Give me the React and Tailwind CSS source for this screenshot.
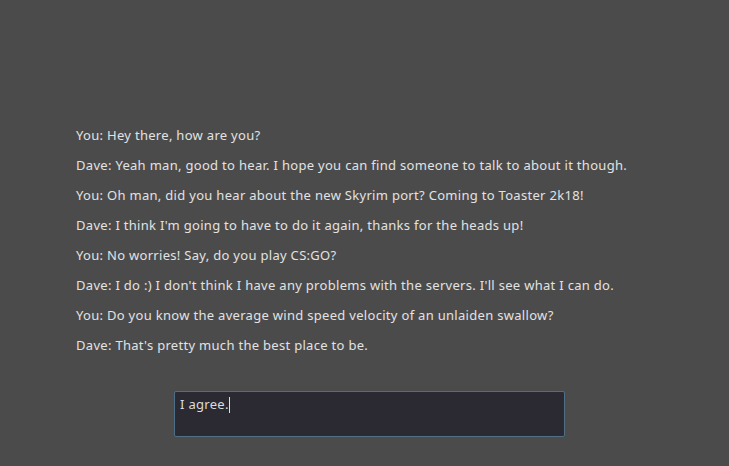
export default function App() {
  const lines = [
    "You: Hey there, how are you?",
    "Dave: Yeah man, good to hear. I hope you can find someone to talk to about it though.",
    "You: Oh man, did you hear about the new Skyrim port? Coming to Toaster 2k18!",
    "Dave: I think I'm going to have to do it again, thanks for the heads up!",
    "You: No worries! Say, do you play CS:GO?",
    "Dave: I do :) I don't think I have any problems with the servers. I'll see what I can do.",
    "You: Do you know the average wind speed velocity of an unlaiden swallow?",
    "Dave: That's pretty much the best place to be.",
  ];
  return (
    <div
      className="w-[729px] h-[466px] bg-[#4b4b4b] text-[#e2e2e2] text-[13px] tracking-[0.3px] overflow-hidden"
      style={{ fontFamily: '"Noto Sans", "DejaVu Sans", sans-serif' }}
    >
      <div className="pt-[120px] pl-[76px]">
        {lines.map((l, i) => (
          <div key={i} className="h-[30px] leading-[30px] whitespace-nowrap">
            {l}
          </div>
        ))}
      </div>
      <div className="pt-[31px] pl-[174px]">
        <div className="w-[391px] h-[46px] bg-[#2b2a33] border border-[#4f6f86] rounded-[2px] px-[5px] pt-[3px] leading-[18px] text-[#dcdcdc]">
          I agree.<span className="inline-block w-px h-[16px] bg-[#e0e0e0] align-middle -mt-[2px]"></span>
        </div>
      </div>
    </div>
  );
}
